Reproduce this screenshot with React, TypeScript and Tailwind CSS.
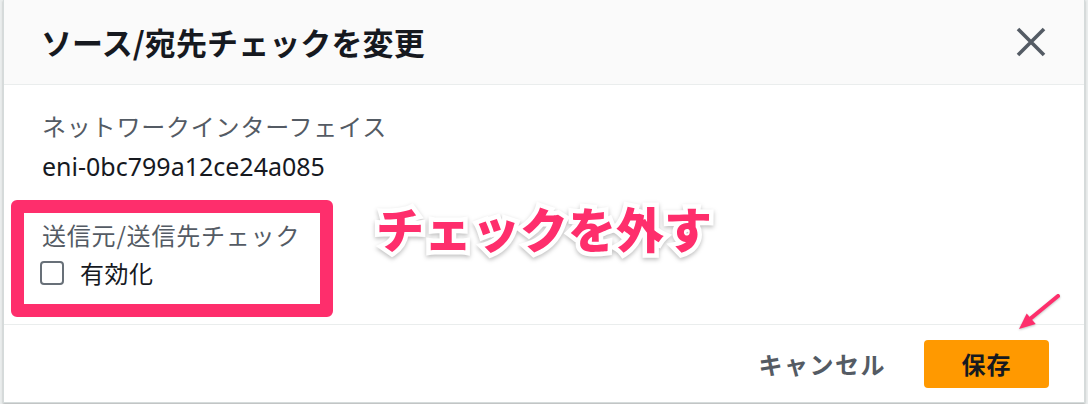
import { useState } from "react";

const jp = "font-['Noto_Sans_CJK_JP','Noto_Sans',sans-serif]";

export default function App() {
  const [enabled, setEnabled] = useState(false);

  return (
    <div className={`w-[1088px] h-[404px] bg-[#eaeded] pl-[3px] pr-[3px] pb-[1px] ${jp}`}>
      <div className="relative h-full flex flex-col bg-white border-x border-b border-[#d5dbdb] shadow-[0_1px_2px_rgba(0,0,0,0.25)]">
        {/* Header */}
        <div className="h-[85px] flex items-center justify-between bg-[#fafafa] border-b border-[#eaeded] pl-[37px] pr-[38px]">
          <h2 className="text-[31px] font-bold text-[#16191f] tracking-[0.1px]">ソース/宛先チェックを変更</h2>
          <button className="w-[30px] h-[30px] flex items-center justify-center">
            <svg width="30" height="30" viewBox="0 0 30 30">
              <path d="M2 2 28 28M28 2 2 28" stroke="#545b64" strokeWidth="3.6" />
            </svg>
          </button>
        </div>

        {/* Body */}
        <div className="flex-1 pl-[38px] pt-[24px]">
          <div className="text-[24px] leading-[34px] tracking-[0.8px] text-[#545b64]">ネットワークインターフェイス</div>
          <div className="mt-[6px] font-['Noto_Sans',sans-serif] text-[25px] leading-[34px] text-[#16191f]">eni-0bc799a12ce24a085</div>

          <div className="mt-[35px] text-[24px] leading-[34px] tracking-[0.8px] text-[#545b64]">送信元/送信先チェック</div>
          <label className="mt-[4px] flex items-center gap-[16px] h-[34px] cursor-pointer">
            <span
              onClick={() => setEnabled(!enabled)}
              className="-ml-[2px] w-[24px] h-[24px] rounded-[4px] border-2 border-[#687078] bg-white"
            />
            <span className="text-[24px] tracking-[0.5px] text-[#16191f]">有効化</span>
          </label>
        </div>

        {/* Footer */}
        <div className="h-[78px] border-t border-[#eaeded] flex items-center justify-end pr-[35px]">
          <button className="mr-[38px] text-[24px] font-bold tracking-[1.5px] text-[#545b64]">キャンセル</button>
          <button className="w-[125px] h-[48px] rounded-[4px] bg-[#ff9900] text-[24px] font-bold tracking-[1px] text-[#16191f]">保存</button>
        </div>

        {/* annotation box */}
        <div className="absolute left-[7px] top-[200px] w-[322px] h-[117px] rounded-[6px] border-[13px] border-[#fe2e6c]" />

        {/* annotation text */}
        <div className="absolute left-[372px] top-[192px] text-[48px] font-black leading-[70px] text-[#fe2e6c] [paint-order:stroke_fill] [-webkit-text-stroke:9px_white] [filter:drop-shadow(0_2px_2px_rgba(0,0,0,0.25))]">
          チェックを外す
        </div>

        {/* arrow */}
        <svg className="absolute left-[1007px] top-[288px]" width="55" height="48" viewBox="0 0 55 48">
          <g className="[filter:drop-shadow(0_1px_1px_rgba(0,0,0,0.25))]">
            <path d="M47 8 L19 31" stroke="#fe2e6c" strokeWidth="4" strokeLinecap="round" />
            <path d="M8 41 L15.7 25.4 L24.7 36 Z" fill="#fe2e6c" />
          </g>
        </svg>
      </div>
    </div>
  );
}
